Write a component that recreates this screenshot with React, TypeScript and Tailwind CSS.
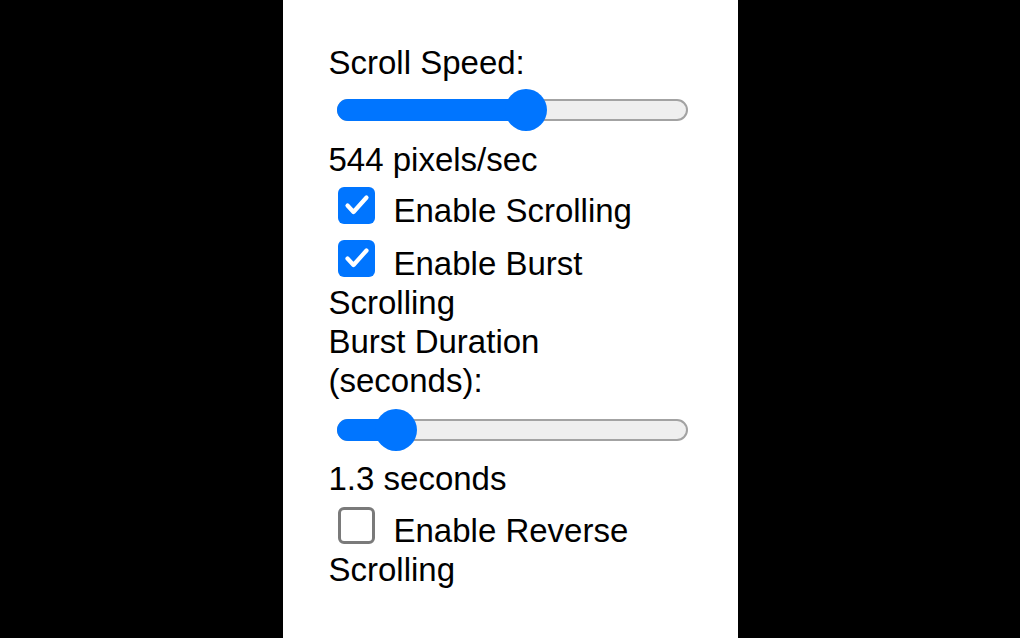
import React from "react";

function Slider({
  value,
  min,
  max,
  className,
}: {
  value: number;
  min: number;
  max: number;
  className: string;
}) {
  const trackWidth = 351;
  const thumb = 42;
  const frac = (value - min) / (max - min);
  const center = thumb / 2 + frac * (trackWidth - thumb);
  return (
    <div className={`relative ml-[8px] mr-[4px] flex h-[42px] items-center ${className}`}>
      <div className="h-[22px] w-full rounded-full border-2 border-[#a3a3a3] bg-[#efefef]" />
      <div
        className="absolute left-0 top-[10px] h-[22px] rounded-l-full bg-[#0075ff]"
        style={{ width: center }}
      />
      <div
        className="absolute top-0 h-[42px] w-[42px] rounded-full bg-[#0075ff]"
        style={{ left: center - thumb / 2 }}
      />
    </div>
  );
}

function CheckRow({ checked, label }: { checked: boolean; label: string }) {
  return (
    <div>
      {checked ? (
        <span className="ml-[9px] mr-[19px] mt-[10px] inline-block h-[37px] w-[37px] rounded-[6px] bg-[#0075ff] align-[-2px]">
          <svg viewBox="0 0 37 37" width="37" height="37" className="block">
            <path
              d="M9.5 18.5 L15.5 25 L28.5 10.5"
              fill="none"
              stroke="white"
              strokeWidth="4.2"
              strokeLinecap="round"
              strokeLinejoin="round"
            />
          </svg>
        </span>
      ) : (
        <span className="ml-[9px] mr-[19px] mt-[10px] inline-block h-[37px] w-[37px] rounded-[6px] border-[3px] border-[#7a7a7a] bg-white align-[-2px]" />
      )}
      <span>{label}</span>
    </div>
  );
}

export default function App() {
  return (
    <div className="flex h-[638px] w-full justify-center bg-black font-['Liberation_Sans',Arial,sans-serif] text-[33px] leading-[39px] text-black">
      <div className="h-[638px] w-[455px] bg-white px-[46px] pt-[43px]">
        <div>Scroll Speed:</div>
        <Slider value={544} min={0} max={1000} className="mb-[10.5px] mt-[6.5px]" />
        <div className="-mt-[1px]">544 pixels/sec</div>
        <div className="-mt-[2px]">
          <CheckRow checked label="Enable Scrolling" />
        </div>
        <CheckRow checked label="Enable Burst Scrolling" />
        <div>Burst Duration (seconds):</div>
        <Slider value={1.3} min={0.5} max={7} className="mb-[8.5px] mt-[8.5px]" />
        <div>1.3 seconds</div>
        <div className="-mt-[1px]">
          <CheckRow checked={false} label="Enable Reverse Scrolling" />
        </div>
      </div>
    </div>
  );
}
